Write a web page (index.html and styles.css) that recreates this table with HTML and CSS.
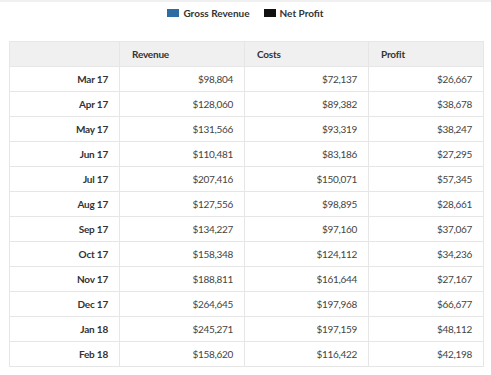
FILE: index.html
```html
<!DOCTYPE html>
<html lang="en">
<head>
<meta charset="UTF-8">
<meta name="viewport" content="width=device-width, initial-scale=1.0">
<title>Revenue Report</title>
<link rel="stylesheet" href="styles.css">
</head>
<body>
<div class="top-strip"></div>
<div class="legend">
  <div class="legend-item"><span class="swatch swatch-revenue"></span>Gross Revenue</div>
  <div class="legend-item"><span class="swatch swatch-profit"></span>Net Profit</div>
</div>

<table class="report">
  <colgroup>
    <col class="col-month">
    <col class="col-revenue">
    <col class="col-costs">
    <col class="col-profit">
  </colgroup>
  <thead>
    <tr>
      <th></th>
      <th>Revenue</th>
      <th>Costs</th>
      <th>Profit</th>
    </tr>
  </thead>
  <tbody>
    <tr><th>Mar 17</th><td>$98,804</td><td>$72,137</td><td>$26,667</td></tr>
    <tr><th>Apr 17</th><td>$128,060</td><td>$89,382</td><td>$38,678</td></tr>
    <tr><th>May 17</th><td>$131,566</td><td>$93,319</td><td>$38,247</td></tr>
    <tr><th>Jun 17</th><td>$110,481</td><td>$83,186</td><td>$27,295</td></tr>
    <tr><th>Jul 17</th><td>$207,416</td><td>$150,071</td><td>$57,345</td></tr>
    <tr><th>Aug 17</th><td>$127,556</td><td>$98,895</td><td>$28,661</td></tr>
    <tr><th>Sep 17</th><td>$134,227</td><td>$97,160</td><td>$37,067</td></tr>
    <tr><th>Oct 17</th><td>$158,348</td><td>$124,112</td><td>$34,236</td></tr>
    <tr><th>Nov 17</th><td>$188,811</td><td>$161,644</td><td>$27,167</td></tr>
    <tr><th>Dec 17</th><td>$264,645</td><td>$197,968</td><td>$66,677</td></tr>
    <tr><th>Jan 18</th><td>$245,271</td><td>$197,159</td><td>$48,112</td></tr>
    <tr><th>Feb 18</th><td>$158,620</td><td>$116,422</td><td>$42,198</td></tr>
  </tbody>
</table>
</body>
</html>
```

FILE: styles.css
```css
body {
  margin: 0;
  padding: 0;
  font-family: Lato, "Open Sans", sans-serif;
  background-color: white;
  color: #333;
}

.top-strip {
  height: 2px;
  background-color: #f0f0f0;
}

.legend {
  display: flex;
  justify-content: center;
  gap: 14px;
  padding-top: 3px;
  height: 16px;
}

.legend-item {
  display: flex;
  align-items: center;
  font-size: 10px;
  font-weight: bold;
  color: #333;
}

.swatch {
  display: inline-block;
  width: 12px;
  height: 8px;
  margin-right: 4px;
}

.swatch-revenue {
  background-color: #2e6da4;
}

.swatch-profit {
  background-color: #111;
}

.report {
  margin: 20px 0 0 9px;
  width: 474px;
  border-collapse: collapse;
  table-layout: fixed;
  font-size: 10px;
  letter-spacing: -0.2px;
}

.col-month { width: 110px; }
.col-revenue { width: 125px; }
.col-costs { width: 124px; }
.col-profit { width: 115px; }

.report th,
.report td {
  height: 25px;
  padding: 0 11px 0 12px;
  border: 1px solid #e6e6e6;
  box-sizing: border-box;
}

.report thead th {
  background-color: #f0f0f0;
  text-align: left;
  font-weight: bold;
  color: #333;
}

.report tbody th {
  text-align: right;
  font-weight: bold;
  color: #333;
}

.report tbody td {
  text-align: right;
  color: #444;
  letter-spacing: -0.3px;
}
```
